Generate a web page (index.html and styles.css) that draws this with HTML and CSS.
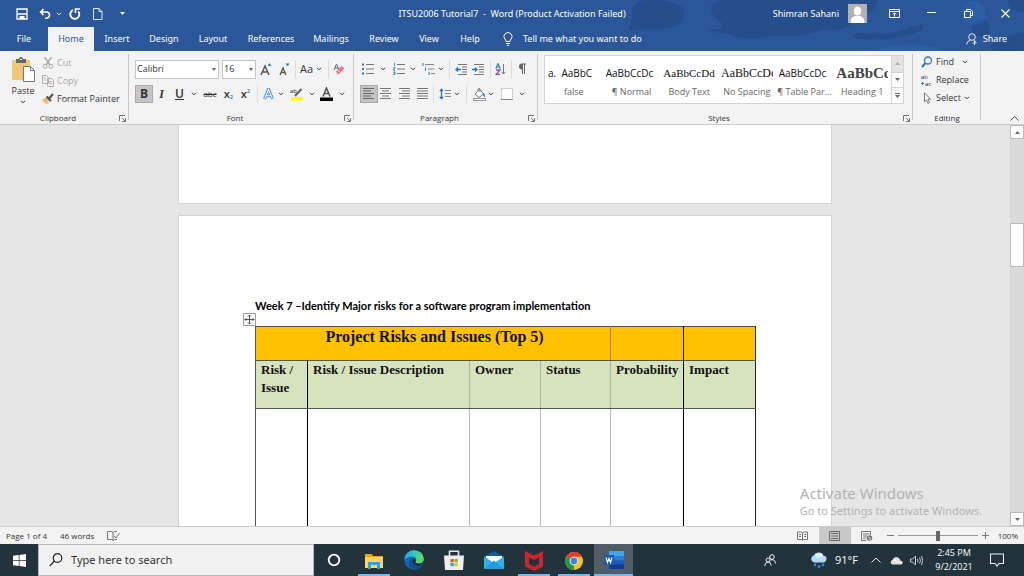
FILE: index.html
```html
<!DOCTYPE html>
<html lang="en">
<head>
<meta charset="utf-8">
<title>ITSU2006 Tutorial7 - Word</title>
<link rel="stylesheet" href="styles.css">
</head>
<body>
<svg class="defs" aria-hidden="true">
  <symbol id="chev" viewBox="0 0 6 4"><path d="M1 .8l2 2 2-2" fill="none" stroke="currentColor"/></symbol>
  <symbol id="launch" viewBox="0 0 7 7"><path d="M.5 6V.5H6M3 3l3 3M6.500 3v3.500H3" fill="none" stroke="#666" stroke-width=".9"/></symbol>
  <symbol id="para" viewBox="0 0 10 12"><path d="M4.500 1H9M5.500 1v10M7.500 1v10" fill="none" stroke="#666"/><path d="M5 .6v6a3 3 0 0 1 0-6z" fill="#666"/></symbol>
</svg>

<header class="top">
  <svg class="pattern" viewBox="0 0 400 51" preserveAspectRatio="xMaxYMin slice" aria-hidden="true">
    <g fill="#254a86" opacity=".65">
      <path d="M14 2q18-6 35 1q14 2 11 14q-6 14-32 12q-14 0-24 2q2-10 5-15q-4-8 5-14z"/>
      <path d="M88 4q10-8 60-4h106q-4 16-22 16q-4 16-34 14q-20 8-50 6q-30 6-42-2q-20-1-22-5q20 2 12-8q-12-8-8-17z"/>
      <path d="M230 33q40 4 55-6q14-2 14-5q4 10-14 12q-20 8-55 4z"/>
      <circle cx="357" cy="28" r="9"/>
      <path d="M384 0h16v12q-18-2-16-12zM366 45q20-12 34-12v18h-30z"/>
    </g>
    <g fill="#2f61ac" opacity=".6"><circle cx="350" cy="13" r="12"/><path d="M250 51q30-12 64-3l8 3z"/></g>
  </svg>
  <div class="titlebar">
    <div class="quick">
      <button aria-label="Save"><svg width="12" height="12" viewBox="0 0 12 12"><path d="M1 1h10v10H1zM1.500 6h9" fill="none" stroke="#fff" stroke-width="1.300"/><path d="M3.500 8h5v3h-5z" fill="#fff"/></svg></button>
      <button aria-label="Undo"><svg width="12" height="12" viewBox="0 0 12 12"><path d="M4.500 1L1.500 4l3 3M1.500 4H7q3.500 0 3.500 3T6 10.500" fill="none" stroke="#fff" stroke-width="1.600"/></svg></button>
      <button aria-label="Undo history"><svg width="6" height="4"><use href="#chev"/></svg></button>
      <button aria-label="Redo"><svg width="12" height="12" viewBox="0 0 12 12"><path d="M4 2.200A4.500 4.500 0 1 0 9.300 3.500" fill="none" stroke="#fff" stroke-width="1.800"/><path d="M6.500 5V1H11" fill="none" stroke="#fff" stroke-width="1.600"/></svg></button>
      <button aria-label="New document"><svg width="10" height="12" viewBox="0 0 10 12"><path d="M.5.500h5.500l3 3v8H.5zM6 .5v3h3" fill="none" stroke="#dfe7f3"/></svg></button>
      <button aria-label="Customize toolbar"><svg width="5" height="3" viewBox="0 0 5 3"><path d="M0 0h5L2.500 3z" fill="#fff"/></svg></button>
    </div>
    <h1 class="title">ITSU2006 Tutorial7 &nbsp;-&nbsp; Word (Product Activation Failed)</h1>
    <div class="winctl">
      <span>Shimran Sahani</span>
      <svg class="avatar" width="19" height="19" viewBox="0 0 19 19"><path d="M0 0h19v19H0z" fill="#b3b1b0"/><ellipse cx="9.500" cy="7" rx="3.600" ry="4.500" fill="#fff"/><path d="M2.500 19q0-6.500 5-7h4q5 .5 5 7z" fill="#fff"/></svg>
      <button aria-label="Ribbon display options"><svg width="11" height="9" viewBox="0 0 11 9"><path d="M.5.500h10v8H.5zM.5 2.500h10M5.500 7.500V4M3.800 5.500l1.700-1.700 1.700 1.700" fill="none" stroke="#fff"/></svg></button>
      <button aria-label="Minimize"><svg width="9" height="9" viewBox="0 0 9 9"><path d="M0 3.500h9" stroke="#fff"/></svg></button>
      <button aria-label="Restore"><svg width="9" height="9" viewBox="0 0 9 9"><path d="M.5 2.500h6v6h-6zM2.500 2.500V.5h4l2 2v4h-2" fill="none" stroke="#fff"/></svg></button>
      <button aria-label="Close"><svg width="9" height="9" viewBox="0 0 9 9"><path d="M.5.500l8 8M8.500.5l-8 8" stroke="#fff" stroke-width="1.100"/></svg></button>
    </div>
  </div>
  <nav class="tabs">
    <button>File</button><button class="active">Home</button><button>Insert</button><button>Design</button><button>Layout</button><button>References</button><button>Mailings</button><button>Review</button><button>View</button><button>Help</button>
    <button class="tell"><svg width="10" height="14" viewBox="0 0 10 14"><path d="M3 9.500Q3 8 1.800 7A4 4 0 1 1 8.200 7Q7 8 7 9.500zM3 11.500h4M3.800 13.300h2.400" fill="none" stroke="#fff"/></svg>Tell me what you want to do</button>
    <button class="share"><svg width="11" height="12" viewBox="0 0 11 12"><circle cx="6" cy="4" r="3.300" fill="none" stroke="#dbe4f2"/><path d="M.5 11.500Q1 8 4.500 7M7.500 7.200q2 .8 2.500 2M6.500 10h4M8.500 8v4" fill="none" stroke="#dbe4f2"/></svg>Share</button>
  </nav>
</header>

<section class="ribbon">
  <div class="group clipboard">
    <div class="body">
      <button class="paste"><svg width="23" height="25" viewBox="0 0 23 25"><path d="M0 3h18v20H0z" fill="#eec77b"/><path d="M4 2h3q0-2 2-2t2 2h3v4H4z" fill="#666"/><path d="M8 2h2v1H8z" fill="#fff"/><path d="M11.500 9.500h7l4 4v11h-11z" fill="#fff" stroke="#777"/><path d="M18.500 9.500v4h4" fill="none" stroke="#777"/></svg>Paste<svg width="6" height="4"><use href="#chev"/></svg></button>
      <div class="stack">
        <button class="off"><svg width="12" height="12" viewBox="0 0 12 12"><path d="M2.500 0L8 8M9.500 0L4 8" stroke="#aaa" stroke-width="1.500"/><g fill="none" stroke="#aaa"><circle cx="3" cy="9.300" r="2"/><circle cx="9" cy="9.300" r="2"/></g></svg>Cut</button>
        <button class="off"><svg width="12" height="12" viewBox="0 0 12 12"><path d="M.5.500h4l2 2v6h-6zM5.500 3.500h4l2 2v6h-6zM2 3h2M2 5h2M7 6.500h3M7 8.500h3" fill="#f3f3f3" stroke="#b9abb3"/></svg>Copy</button>
        <button><svg width="12" height="12" viewBox="0 0 12 12"><path d="M1 6l3.500-1.500L8 8l-3 3.500-1.500-1L2.500 10 0 7z" fill="#eec077"/><path d="M4.500 3.500L9 8M7 5.500L11 1" stroke="#555" stroke-width="2.200"/></svg>Format Painter</button>
      </div>
    </div>
    <div class="foot"><span>Clipboard</span><button aria-label="Clipboard options"><svg width="7" height="7"><use href="#launch"/></svg></button></div>
  </div>

  <div class="group font">
    <div class="body rows">
      <div class="row f1">
        <label class="pick"><select aria-label="Font"><option>Calibri</option></select></label>
        <label class="pick size"><select aria-label="Font size"><option>16</option></select></label>
        <button aria-label="Grow font"><svg width="12" height="13" viewBox="0 0 12 13"><path d="M1 12L5 3l4 9M2.500 9h5" fill="none" stroke="#555" stroke-width="1.500"/><path d="M8 2.500L9.500.500 11 2.500z" fill="#2f75b5" stroke="#2f75b5" stroke-width=".6"/></svg></button>
        <button aria-label="Shrink font"><svg width="12" height="13" viewBox="0 0 12 13"><path d="M2 12l3-7 3 7M3 9.500h4" fill="none" stroke="#555" stroke-width="1.300"/><path d="M8 .8h3L9.500 2.800z" fill="#2f75b5" stroke="#2f75b5" stroke-width=".6"/></svg></button>
        <i class="sep"></i>
        <button class="case">Aa</button><svg width="6" height="4"><use href="#chev"/></svg>
        <i class="sep"></i>
        <button aria-label="Clear formatting"><svg width="12" height="12" viewBox="0 0 12 12"><path d="M1 7l2.500-6L6 7M2 5h3" fill="none" stroke="#666"/><path d="M3 8.500L8.500 3l3 2.500L6 11H4.500z" fill="#e8798b"/><path d="M4.500 7l3 2.500" stroke="#f6c3cb"/></svg></button>
      </div>
      <div class="row f2">
        <button class="on"><b>B</b></button><button class="it">I</button><button class="un">U</button><svg width="6" height="4"><use href="#chev"/></svg>
        <button class="strike">abc</button>
        <button class="xs">x<sub>2</sub></button><button class="xs">x<sup>2</sup></button>
        <i class="sep"></i>
        <button aria-label="Text effects"><svg width="11" height="12" viewBox="0 0 11 12"><path d="M1.500 11l4-10 4 10M3 7.800h5" fill="none" stroke="#4a8fd0" stroke-width="3"/><path d="M1.700 10.500L5.500 1.500l3.800 9M3 7.800h5" fill="none" stroke="#fff" stroke-width="1.100"/></svg></button><svg width="6" height="4"><use href="#chev"/></svg>
        <button aria-label="Highlight colour"><svg width="14" height="14" viewBox="0 0 14 14"><path d="M1 10h12v3.500H1z" fill="#ff0"/><path d="M5 9l6.500-7" stroke="#666" stroke-width="2.200"/><text x="0" y="6" class="tiny">ab</text></svg></button><svg width="6" height="4"><use href="#chev"/></svg>
        <button aria-label="Font colour"><svg width="13" height="14" viewBox="0 0 13 14"><path d="M0 10.500h13V14H0z"/><path d="M3 9.500L6.500 1 10 9.500M4.500 6.500h4" fill="none" stroke="#555" stroke-width="1.500"/></svg></button><svg width="6" height="4"><use href="#chev"/></svg>
      </div>
    </div>
    <div class="foot"><span>Font</span><button aria-label="Font options"><svg width="7" height="7"><use href="#launch"/></svg></button></div>
  </div>

  <div class="group paragraph">
    <div class="body rows">
      <div class="row p1">
        <button aria-label="Bullets"><svg width="12" height="12" viewBox="0 0 12 12"><path d="M0 1.500h2M0 6h2M0 10.500h2" stroke="#2f75b5" stroke-width="2"/><path d="M4 1.500h8M4 6h8M4 10.500h8" stroke="#777"/></svg></button><svg width="6" height="4"><use href="#chev"/></svg>
        <button aria-label="Numbering"><svg width="12" height="12" viewBox="0 0 12 12"><path d="M1.500 0v3M.5 4.500h1.500v1.500H.5v1.500H2M.5 9h1.500v2.500H.5M.5 10.200H2" stroke="#2f75b5" fill="none" stroke-width=".8"/><path d="M4 1.500h8M4 6h8M4 10.500h8" stroke="#777"/></svg></button><svg width="6" height="4"><use href="#chev"/></svg>
        <button aria-label="Multilevel list"><svg width="13" height="12" viewBox="0 0 13 12"><path d="M1 0v3M3.500 4.500v3M7 9v3" stroke="#2f75b5"/><path d="M3 1.500h9M6 6h6.500M9 10.500h4" stroke="#888"/></svg></button><svg width="6" height="4"><use href="#chev"/></svg>
        <i class="sep"></i>
        <button aria-label="Decrease indent"><svg width="12" height="11" viewBox="0 0 12 11"><path d="M3 .5h9M7 3h5M7 5.500h5M7 8h5M3 10.500h9" stroke="#777"/><path d="M6 5.500H1M3 3.500l-2 2 2 2" fill="none" stroke="#2f75b5" stroke-width="1.400"/></svg></button>
        <button aria-label="Increase indent"><svg width="12" height="11" viewBox="0 0 12 11"><path d="M2 .5h10M7 3h5M7 5.500h5M7 8h5M2 10.500h10" stroke="#777"/><path d="M0 5.500h5M3 3.500l2 2-2 2" fill="none" stroke="#2f75b5" stroke-width="1.400"/></svg></button>
        <i class="sep"></i>
        <button aria-label="Sort"><svg width="11" height="12" viewBox="0 0 11 12"><path d="M.8 5.500L3 .5l2.200 5M1.500 4h3" fill="none" stroke="#2f75b5" stroke-width="1.100"/><path d="M1 7h4l-4 4.500h4" fill="none" stroke="#8852a8" stroke-width="1.300"/><path d="M8.500 1v10M6.500 8.800l2 2.200 2-2.200" fill="none" stroke="#777"/></svg></button>
        <i class="sep"></i>
        <button aria-label="Show paragraph marks"><svg width="10" height="12"><use href="#para"/></svg></button>
      </div>
      <div class="row p2">
        <button class="on" aria-label="Align left"><svg width="12" height="12" viewBox="0 0 12 12"><path d="M0 .5h11M0 3h8M0 5.500h11M0 8h8M0 10.500h11" stroke="#666"/></svg></button>
        <button aria-label="Centre"><svg width="12" height="12" viewBox="0 0 12 12"><path d="M0 .5h11M2 3h7M0 5.500h11M2 8h7M0 10.500h11" stroke="#777"/></svg></button>
        <button aria-label="Align right"><svg width="12" height="12" viewBox="0 0 12 12"><path d="M0 .5h11M3 3h8M0 5.500h11M3 8h8M0 10.500h11" stroke="#777"/></svg></button>
        <button aria-label="Justify"><svg width="12" height="12" viewBox="0 0 12 12"><path d="M0 .5h11M0 3h11M0 5.500h11M0 8h11M0 10.500h11" stroke="#777"/></svg></button>
        <i class="sep"></i>
        <button aria-label="Line spacing"><svg width="12" height="12" viewBox="0 0 12 12"><path d="M2.500 1v10M.8 3.200l1.700-2 1.700 2M.8 8.800l1.700 2 1.700-2" fill="none" stroke="#2f75b5" stroke-width="1.300"/><path d="M6 2.500h6M6 5.500h6M6 8.500h6" stroke="#888"/></svg></button><svg width="6" height="4"><use href="#chev"/></svg>
        <i class="sep"></i>
        <button aria-label="Shading"><svg width="13" height="13" viewBox="0 0 13 13"><path d="M2 6l5-4.500L10.500 6 6 9.500zM5 3V1q1-1 2 0v3" fill="#fff" stroke="#777"/><path d="M10 5q3 1 1.500 4.500L10 7z" fill="#2f75b5"/><path d="M.5 10.500h12v2H.5z" fill="#fff" stroke="#999"/></svg></button><svg width="6" height="4"><use href="#chev"/></svg>
        <button aria-label="Borders"><svg width="12" height="12" viewBox="0 0 12 12"><path d="M.5.500h11v11H.5z" fill="#fff" stroke="#bbb" stroke-dasharray="2 1"/><path d="M0 11.500h12" stroke="#888"/></svg></button><svg width="6" height="4"><use href="#chev"/></svg>
      </div>
    </div>
    <div class="foot"><span>Paragraph</span><button aria-label="Paragraph options"><svg width="7" height="7"><use href="#launch"/></svg></button></div>
  </div>

  <div class="group styles">
    <div class="body">
      <div class="gallery">
        <button><span class="demo">a. &nbsp;AaBbC</span><span>false</span></button>
        <button><span class="demo">AaBbCcDc</span><span>¶ Normal</span></button>
        <button><span class="demo serif">AaBbCcDd</span><span>Body Text</span></button>
        <button><span class="demo serif big">AaBbCcDc</span><span>No Spacing</span></button>
        <button><span class="demo">AaBbCcDc</span><span>¶ Table Par...</span></button>
        <button><span class="demo serif head">AaBbCc</span><span>Heading 1</span></button>
        <div class="gscroll">
          <button class="dim" aria-label="Previous styles"><svg width="5" height="3" viewBox="0 0 5 3"><path d="M0 3h5L2.500 0z" fill="#aaa"/></svg></button>
          <button aria-label="Next styles"><svg width="5" height="3" viewBox="0 0 5 3"><path d="M0 0h5L2.500 3z" fill="#666"/></svg></button>
          <button aria-label="More styles"><svg width="5" height="5" viewBox="0 0 5 5"><path d="M0 .5h5" stroke="#666"/><path d="M0 2h5L2.500 5z" fill="#666"/></svg></button>
        </div>
      </div>
    </div>
    <div class="foot"><span>Styles</span><button aria-label="Style options"><svg width="7" height="7"><use href="#launch"/></svg></button></div>
  </div>

  <div class="group editing">
    <div class="body stack">
      <button><svg width="12" height="12" viewBox="0 0 12 12"><circle cx="7" cy="4.500" r="3.500" fill="none" stroke="#2f75b5" stroke-width="1.300"/><path d="M4.500 7L1 11" stroke="#2f75b5" stroke-width="2"/></svg>Find<svg class="gap" width="6" height="4"><use href="#chev"/></svg></button>
      <button><svg width="12" height="12" viewBox="0 0 12 12"><text x="0" y="5" class="tiny">a<tspan fill="#8852a8">b</tspan></text><text x="4" y="12" class="tiny">ac</text><path d="M0 9.500h3M1.500 8v3" stroke="#2f75b5"/></svg>Replace</button>
      <button><svg width="12" height="12" viewBox="0 0 12 12"><path d="M3.500.800v9l2-2 1.500 3.500 1.500-.8L7 7.200h2.500z" fill="#fff" stroke="#777"/></svg>Select<svg width="6" height="4"><use href="#chev"/></svg></button>
    </div>
    <div class="foot"><span>Editing</span></div>
  </div>
  <button class="collapse" aria-label="Collapse ribbon"><svg width="9" height="5" viewBox="0 0 9 5"><path d="M.5 4.500l4-4 4 4" fill="none" stroke="#555"/></svg></button>
</section>

<main class="work">
  <div class="canvas">
    <div class="page prev"></div>
    <article class="page">
      <h2>Week 7 –Identify Major risks for a software program implementation</h2>
      <svg class="handle" width="13" height="13" viewBox="0 0 13 13"><path d="M.5.500h12v12H.5z" fill="#fff" stroke="#999"/><path d="M6.500 2v9M2 6.500h9M5 3.500l1.500-1.500L8 3.500M5 9.500L6.500 11 8 9.500M3.500 5L2 6.500 3.500 8M9.500 5L11 6.500 9.500 8" fill="none" stroke="#444" stroke-width=".9"/></svg>
      <table>
        <colgroup><col class="c1"><col class="c2"><col class="c3"><col class="c4"><col class="c5"><col class="c6"></colgroup>
        <thead>
          <tr class="band"><th colspan="4">Project Risks and Issues (Top 5)</th><th class="dark"></th><th></th></tr>
          <tr class="names"><th class="dark">Risk / Issue</th><th>Risk / Issue Description</th><th>Owner</th><th>Status</th><th class="dark">Probability</th><th>Impact</th></tr>
        </thead>
        <tbody><tr class="blank"><td class="dark"></td><td></td><td></td><td></td><td class="dark"></td><td></td></tr></tbody>
      </table>
    </article>
  </div>
  <div class="scroll">
    <button aria-label="Scroll up"><svg width="5" height="3" viewBox="0 0 5 3"><path d="M0 3h5L2.500 0z" fill="#666"/></svg></button>
    <div class="thumb"></div>
    <button aria-label="Scroll down"><svg width="5" height="3" viewBox="0 0 5 3"><path d="M0 0h5L2.500 3z" fill="#666"/></svg></button>
  </div>
  <div class="watermark"><strong>Activate Windows</strong><span>Go to Settings to activate Windows.</span></div>
</main>

<footer class="status">
  <span>Page 1 of 4</span><span>46 words</span>
  <svg width="13" height="10" viewBox="0 0 13 10"><path d="M.5.500h4l1.500 1v8L4.500 8.500h-4zM6 1.500l1.500-1H10M6 9.500l1.500-1H10M7 5l2 2 3.500-5" fill="none" stroke="#777"/></svg>
  <div class="views">
    <button aria-label="Read mode"><svg width="11" height="10" viewBox="0 0 11 10"><path d="M.5 1h4l1 1 1-1h4v7.500h-4l-1 1-1-1h-4zM5.500 2v7.500M2 3.500h2M2 5.500h2M7 3.500h2M7 5.500h2" fill="none" stroke="#777"/></svg></button>
    <button class="on" aria-label="Print layout"><svg width="11" height="10" viewBox="0 0 11 10"><path d="M.5.500h10v9H.5zM2 2.500h7M2 5h7M2 7.500h7" fill="none" stroke="#666"/></svg></button>
    <button aria-label="Web layout"><svg width="12" height="10" viewBox="0 0 12 10"><path d="M5 9.500H.5v-9h9V4M2 3h6M2 5h4M2 7h3" fill="none" stroke="#777"/><circle cx="8.500" cy="7" r="2.800" fill="#777"/><path d="M7 6l2 1v2" stroke="#ddd" fill="none"/></svg></button>
  </div>
  <div class="zoom"><button aria-label="Zoom out"><svg width="7" height="7" viewBox="0 0 7 7"><path d="M0 3.500h7" stroke="#777"/></svg></button><input type="range" min="0" max="100" value="50" aria-label="Zoom"><button aria-label="Zoom in"><svg width="7" height="7" viewBox="0 0 7 7"><path d="M0 3.500h7M3.500 0v7" stroke="#777"/></svg></button></div>
  <span class="pct">100%</span>
</footer>

<nav class="taskbar">
  <button class="start" aria-label="Start"><svg width="13" height="13" viewBox="0 0 13 13"><path d="M0 1.800L5.800 1v5.200H0zM6.500.9L13 0v6.200H6.500zM0 6.900h5.800V12L0 11.200zM6.500 6.900H13V13l-6.500-.9z" fill="#fff"/></svg></button>
  <label class="search"><svg width="14" height="14" viewBox="0 0 14 14"><circle cx="8.500" cy="5" r="4.300" fill="none" stroke="#222" stroke-width="1.200"/><path d="M5.500 8L.7 13" stroke="#222" stroke-width="1.200"/></svg><input type="text" placeholder="Type here to search" aria-label="Search"></label>
  <div class="apps">
    <button aria-label="Cortana"><svg width="14" height="14" viewBox="0 0 14 14"><circle cx="7" cy="7" r="5.300" fill="none" stroke="#fff" stroke-width="1.800"/></svg></button>
    <button class="run" aria-label="File Explorer"><svg width="18" height="15" viewBox="0 0 18 15"><path d="M0 0h7l1 2h10v12H0z" fill="#e2a21b"/><path d="M0 3h18v11H0z" fill="#fbd565"/><path d="M3 8h12v7h-3v-4H6v4H3z" fill="#3f9ade"/></svg></button>
    <button aria-label="Edge"><svg width="20" height="20" viewBox="0 0 20 20"><defs><linearGradient id="eg"><stop offset="0" stop-color="#27a7e7"/><stop offset=".5" stop-color="#2dc7c4"/><stop offset="1" stop-color="#68de52"/></linearGradient></defs><circle cx="10" cy="10" r="9.700" fill="#1267b8"/><path d="M.4 9.500Q1 1 10 .3q9.500.7 9.700 8.700 0 4-4.500 4.200-4 0-3.500-1.700 1.500-2.500-.5-4Q7 4.500.4 9.500z" fill="url(#eg)"/><path d="M7 11q.5 7 11 4.500-2 3.500-6 4.200Q4 18.500 5 12.500 6 8.500 9 8q-2 1-2 3z" fill="#124c91"/><path d="M9 8.500q-2 2.500 0 5.500 3 3 8 1.500l3-4V8q0 6-6 5.200-3-.2-2.200-1.800Q12.500 8.500 9 8.500z" fill="#22333b"/><path d="M11.700 11.400q-.5 1.800 3.500 1.800 3 0 4.400-3V7h-7z" fill="#55d36d"/></svg></button>
    <button aria-label="Microsoft Store"><svg width="20" height="20" viewBox="0 0 20 20"><path d="M5.500 6V1.200h9V6" fill="none" stroke="#e8e8e8" stroke-width="1.600"/><path d="M0 5.500h20L19 20H1z" fill="#eee"/><path d="M6.500 9h3.200v3.200H6.500z" fill="#e64b25"/><path d="M10.500 9h3.200v3.200h-3.200z" fill="#7cb816"/><path d="M6.500 13h3.200v3.200H6.500z" fill="#18a3e5"/><path d="M10.500 13h3.200v3.200h-3.200z" fill="#fbb813"/></svg></button>
    <button aria-label="Mail"><svg width="20" height="18" viewBox="0 0 20 18"><path d="M0 5.500L10 0l10 5.500V18H0z" fill="#0a5ea8"/><path d="M2 5h16v8H2z" fill="#fff"/><path d="M0 5.500L10 12l10-6.500V18H0z" fill="#31b0ec"/><path d="M0 18L10 9.500 20 18z" fill="#239cdf"/></svg></button>
    <button class="run" aria-label="McAfee"><svg width="18" height="20" viewBox="0 0 18 20"><path d="M0 0l9 4.500L18 0v15.500L9 20 0 15.500zM4 6.500V13l5 2.800 5-2.800V6.500L9 9z" fill="#c9252c" fill-rule="evenodd"/></svg></button>
    <button class="run" aria-label="Chrome"><svg width="18" height="18" viewBox="0 0 18 18"><circle cx="9" cy="9" r="9" fill="#fbc116"/><path d="M9 9L1.200 4.500A9 9 0 0 1 16.800 4.500z" fill="#df4335"/><path d="M9 9v9A9 9 0 0 1 1.200 4.500z" fill="#279847"/><path d="M9 4.500h7.800L12 11z" fill="#fbc116"/><path d="M1.500 4A9 9 0 0 1 16.800 4.500H9z" fill="#df4335"/><circle cx="9" cy="9" r="4.300" fill="#fff"/><circle cx="9" cy="9" r="3.400" fill="#3f80ec"/></svg></button>
    <button class="run cur" aria-label="Word"><svg width="20" height="18" viewBox="0 0 20 18"><path d="M5 0h15v5H5z" fill="#41a5ee"/><path d="M5 5h15v4.500H5z" fill="#2b7cd3"/><path d="M5 9.500h15V14H5z" fill="#185abd"/><path d="M5 13.500h15V18H5z" fill="#103f91"/><path d="M0 4h10v10H0z" fill="#1b57b5"/><path d="M2 6.500l1.500 5L5 7.500l1.500 4 1.500-5" fill="none" stroke="#fff" stroke-width="1.200"/></svg></button>
  </div>
  <div class="tray">
    <button aria-label="People"><svg width="12" height="13" viewBox="0 0 12 13"><g fill="none" stroke="#eee"><circle cx="8" cy="3" r="2.300"/><circle cx="4" cy="6" r="2"/><path d="M.7 12q.3-4 3.300-4t3.300 3.500M6.500 6q4.500-1.500 5 3.500"/></g></svg></button>
    <button class="weather"><svg width="17" height="16" viewBox="0 0 17 16"><path d="M4 10.500a3.700 3.700 0 0 1-.5-7Q6-.5 10 .8q2.500 0 3.500 3 3.500.4 3 3.500-.5 3-3.500 3.200z" fill="#b7d8f3"/><path d="M5 5q1-4 5-4 3 .5 3 3-4 3-8 1z" fill="#e2f0fb"/><path d="M4 13l1-1.500L6 13q0 1-1 1t-1-1zM8 14.500L9 13l1 1.500q0 1-1 1t-1-1zM12 13l1-1.500 1 1.500q0 1-1 1t-1-1z" fill="#2b8ae6" stroke="#2b8ae6"/></svg>91°F</button>
    <button aria-label="Hidden icons"><svg width="10" height="6" viewBox="0 0 10 6"><path d="M.5 5.500L5 1l4.500 4.500" fill="none" stroke="#eee"/></svg></button>
    <button aria-label="OneDrive"><svg width="13" height="9" viewBox="0 0 13 9"><path d="M2.500 8.500a2.300 2.300 0 0 1 0-4.500Q4 0 8 1.500q2 1 2.200 3 2.500 0 2.500 2t-2 2z" fill="#ddd"/><path d="M3 4q2-.5 4 1.500l5 2.500" fill="none" stroke="#fff"/></svg></button>
    <button aria-label="Volume"><svg width="13" height="11" viewBox="0 0 13 11"><path d="M.5 4h2L5.500 1v9l-3-3h-2zM7.500 4q1 1.500 0 3M9.500 2.500q2 3 0 6M11.500 1q2.500 4.500 0 9" fill="none" stroke="#ddd" stroke-width=".9"/></svg></button>
    <button class="clock"><span>2:45 PM</span><span>9/2/2021</span></button>
    <button aria-label="Notifications"><svg width="14" height="14" viewBox="0 0 14 14"><path d="M.5 1h13v9.500H9L7 13l-2-2.500H.5z" fill="none" stroke="#eee" stroke-width="1.100"/></svg></button>
  </div>
</nav>
</body>
</html>
```

FILE: styles.css
```css
* { box-sizing: border-box; }
body {
  margin: 0;
  height: 100vh;
  display: flex;
  flex-direction: column;
  overflow: hidden;
  font: 9px/14px "Open Sans", "Noto Sans", sans-serif;
  color: #333;
}
button, input, select { font: inherit; color: inherit; border: 0; background: none; padding: 0; margin: 0; }
button { display: flex; align-items: center; justify-content: center; white-space: nowrap; }
svg { flex: none; display: block; }
.defs { position: absolute; width: 0; height: 0; }
.tiny { font: 6px "Open Sans", sans-serif; fill: #222; }

/* Title bar and tabs */
.top { position: relative; background: #2b579a; color: #fff; flex: none; font-family: "Noto Sans", sans-serif; }
.pattern { position: absolute; right: 0; top: 0; width: 400px; height: 100%; }
.titlebar { position: relative; display: grid; grid-template-columns: 1fr auto 1fr; align-items: center; height: 27px; }
.quick { display: grid; grid-template-columns: 28px 18px 10px 22px 24px 24px; padding-left: 8px; }
.title { margin: 0; font-size: 9px; font-weight: 400; white-space: nowrap; }
.winctl { display: flex; justify-content: flex-end; align-items: center; }
.winctl button { width: 37px; height: 24px; }
.avatar { margin: 0 9px; }
.tabs { position: relative; display: grid; grid-template-columns: 48px 46px 46px 48px 50px 66px 54px 52px 38px 44px auto 1fr; height: 24px; }
.tabs .active { background: #f3f3f3; color: #2b579a; }
.tabs .tell { padding-left: 11px; gap: 10px; }
.tabs .share { justify-content: flex-end; padding-right: 17px; gap: 6px; }

/* Ribbon */
.ribbon { display: flex; flex: none; height: 74px; background: #f3f3f3; border-bottom: 1px solid #ccc; color: #333; }
.group { position: relative; display: flex; flex-direction: column; }
.group::after { content: ""; position: absolute; right: 0; top: 3px; bottom: 4px; width: 1px; background: #c6c6c6; }
.body { flex: 1; display: flex; }
.foot { display: flex; align-items: center; height: 12px; font-size: 8px; line-height: 12px; }
.foot span { flex: 1; text-align: center; }
.foot button { width: 13px; }
.clipboard { width: 129px; }
.font { width: 225px; }
.paragraph { width: 184px; }
.styles { width: 375px; }
.editing { width: 68px; }
.paste { flex-direction: column; justify-content: flex-start; width: 42px; padding: 6px 0 0 4px; gap: 2px; }
.stack { display: flex; flex-direction: column; align-items: flex-start; padding-top: 3px; }
.stack button { height: 18px; gap: 3px; }
.stack .off { color: #aaa; }
.body.stack { padding: 2px 0 0 8px; }
.stack .gap { margin-left: 5px; }
.rows { flex-direction: column; padding: 6px 0 0 6px; gap: 1px; }
.row { display: grid; align-items: center; justify-items: center; height: 24px; }
.f1 { grid-template-columns: 84px 37px 20px 16px 6px 17px 8px 10px 12px; }
.f2 { grid-template-columns: 18px 17px 19px 10px 22px 15px 19px 5px 16px 9px 23px 7px 22px 9px; }
.p1 { grid-template-columns: 16px 14px 18px 10px 20px 6px 10px 14px 20px 4px 17px 4px 18px; }
.p2 { grid-template-columns: 18px 16px 21px 15px 6px 18px 6px 12px 14px 10px 22px 7px; }
.sep { width: 1px; height: 18px; background: #dcdcdc; }
.pick { position: relative; justify-self: end; width: 84px; }
.pick.size { width: 34px; }
.pick select { appearance: none; display: block; width: 100%; height: 19px; padding-left: 1px; border: 1px solid #c6c6c6; background: #fff; }
.pick::after { content: ""; position: absolute; right: 3px; top: 8px; border: 2px solid transparent; border-top: 3px solid #666; border-bottom: 0; }
.row .on { width: 18px; height: 18px; background: #c5c5c5; border: 1px solid #aaa; }
.row button { font-size: 12px; }
.row .case { font-size: 11px; }
.it { font-family: "Liberation Serif", serif; font-style: italic; font-weight: 700; }
.un { text-decoration: underline; font-weight: 600; }
.row .strike { font-size: 8px; text-decoration: line-through; }
.row .xs { font-size: 11px; font-weight: 600; align-items: center; }
.xs sub, .xs sup { font-size: 6px; line-height: 8px; color: #2f75b5; }
.xs sub { align-self: flex-end; }
.xs sup { align-self: flex-start; }
.gallery { display: grid; grid-template-columns: repeat(6, 1fr) 12px; width: 360px; height: 49px; margin: 4px 0 0 6px; background: #fff; border: 1px solid #d4d4d4; }
.gallery > button { flex-direction: column; justify-content: flex-start; gap: 5px; min-width: 0; overflow: hidden; padding: 10px 3px 0; color: #666; }
.demo { width: 100%; overflow: hidden; color: #111; font-size: 10px; line-height: 14px; text-align: left; }
.demo.serif { font-family: "Liberation Serif", serif; font-size: 11px; }
.demo.big { font-size: 12px; }
.demo.head { font-size: 15px; font-weight: 700; color: #444; }
.gscroll { display: grid; grid-template-rows: 1fr 1fr 1fr; border-left: 1px solid #d4d4d4; }
.gscroll button + button { border-top: 1px solid #d4d4d4; }
.gscroll .dim { background: #e3e3e3; }
.collapse { margin-left: auto; align-self: flex-end; width: 20px; height: 11px; }

/* Document */
.work { position: relative; flex: 1; min-height: 0; display: flex; background: #e6e6e6; }
.canvas { flex: 1; overflow: hidden; }
.page { position: relative; width: 654px; height: 845px; margin: 0 auto; padding: 83px 76px; background: #fff; border: 1px solid #d4d4d4; }
.page.prev { height: 79px; margin-bottom: 11px; border-top: 0; padding: 0; }
.page h2 { margin: 0; font: 700 11px/14px Lato, "Open Sans", sans-serif; color: #000; white-space: nowrap; }
.handle { position: absolute; left: 64px; top: 97px; }
table { table-layout: fixed; width: 500px; margin-top: 13px; border-collapse: collapse; font-family: "Liberation Serif", serif; color: #111; }
.c1 { width: 52px; } .c2 { width: 162px; } .c3 { width: 71px; } .c4 { width: 70px; } .c5 { width: 73px; } .c6 { width: 72px; }
th, td { vertical-align: top; padding: 0 2px 0 5px; border: 1px solid #555; border-left-color: #bbb; border-right-color: #bbb; text-align: left; }
tr > :first-child { border-left-color: #555; }
tr > :last-child { border-right-color: #222; }
tr > .dark { border-right-color: #000; }
tr > .dark + * { border-left-color: #000; }
.band th { height: 34px; background: #ffc000; font-size: 16px; line-height: 20px; text-align: center; }
.band th:first-child { border-right-color: #a8862a; }
.names th { height: 48px; background: #d7e3bc; font-size: 13px; line-height: 18px; }
.names th:nth-child(n+2):nth-child(-n+4) { border-right-color: #a9b593; }
.blank td { height: 400px; }
.scroll { width: 14px; display: flex; flex-direction: column; justify-content: space-between; background: #dadada; }
.scroll button { height: 14px; border: 1px solid #bbb; background: #fff; }
.thumb { height: 44px; margin-bottom: 161px; background: #fff; border: 1px solid #bbb; }
.watermark { position: absolute; right: 42px; bottom: 6px; display: flex; flex-direction: column; color: #b3b3b3; font: 11px/18px "Noto Sans", sans-serif; }
.watermark strong { font-size: 15px; font-weight: 400; }

/* Status bar */
.status { display: flex; align-items: center; flex: none; height: 18px; padding: 0 6px; gap: 13px; background: #f3f3f3; border-top: 1px solid #ccc; font-size: 8px; color: #333; }
.views { display: flex; margin-left: auto; align-self: stretch; }
.views button { width: 32px; }
.views .on { background: #c8c8c8; }
.zoom { display: flex; align-items: center; gap: 4px; margin: 0 -4px 0 -9px; }
.zoom input { appearance: none; width: 80px; height: 11px; background: linear-gradient(#999, #999) center / 100% 1px no-repeat; }
.zoom input::-webkit-slider-thumb { appearance: none; width: 4px; height: 10px; background: #666; }

/* Taskbar */
.taskbar { display: flex; flex: none; height: 32px; background: #22333b; color: #fff; }
.start { width: 38px; }
.search { display: flex; align-items: center; width: 276px; padding-left: 10px; gap: 8px; background: #f2f2f2; border: 1px solid #b8b8b8; }
.search input { flex: 1; min-width: 0; font: 11px/16px "Noto Sans", sans-serif; }
.search input::placeholder { color: #333; }
.apps { display: flex; }
.apps button { width: 40px; border: 0 solid transparent; border-width: 2px 4px; }
.apps .run { background: linear-gradient(#76b9ed, #76b9ed) bottom / 100% 2px no-repeat padding-box; border-bottom-width: 0; }
.apps .cur { width: 39px; border-left-width: 0; border-right-width: 0; background-color: #515d65; border-top-width: 0; }
.tray { display: flex; margin-left: auto; padding-right: 17px; align-items: center; font-size: 11px; }
.tray button { width: 20px; }
.tray button:first-child { margin-right: 30px; }
.tray .weather { width: auto; gap: 8px; margin-right: 8px; }
.tray .clock { width: 56px; margin-right: 5px; flex-direction: column; font-size: 9px; }
```
